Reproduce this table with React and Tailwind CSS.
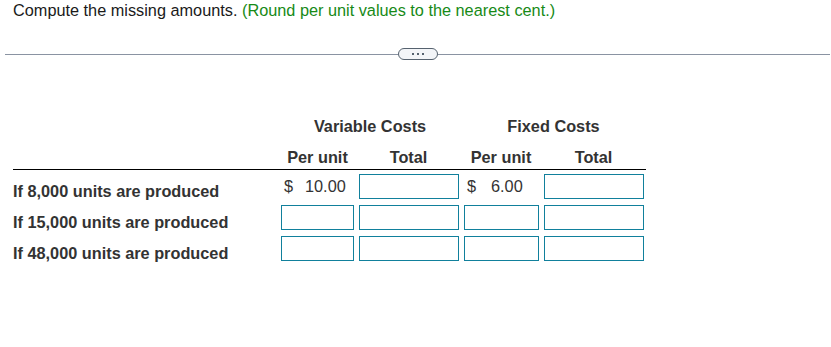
import React from "react";

const font = { fontFamily: '"Liberation Sans", Arial, sans-serif' };

function Box({ w }) {
  return <div className={`h-[25px] border border-[#11809c] bg-white ${w}`} />;
}

export default function App() {
  const rows = [
    { label: "If 8,000 units are produced", varUnit: "10.00", fixUnit: "6.00" },
    { label: "If 15,000 units are produced" },
    { label: "If 48,000 units are produced" },
  ];

  return (
    <div className="w-[831px] h-[347px] bg-white text-[#333]" style={font}>
      <p className="pl-[13px] pt-[1px] text-[16.3px] leading-[18px] text-[#1a1a1a]">
        Compute the missing amounts.{" "}
        <span className="text-[#178a17]">(Round per unit values to the nearest cent.)</span>
      </p>

      {/* section divider with collapse handle */}
      <div className="mt-[29px] flex items-center pl-[5px] pr-[1px]">
        <div className="h-px flex-1 bg-[#8a93a2]" />
        <div className="flex h-[12px] w-[40px] items-center justify-center gap-[3px] rounded-full border border-[#56626f] bg-[#f3f5f8]">
          <span className="h-[2px] w-[2px] bg-[#56626f]" />
          <span className="h-[2px] w-[2px] bg-[#56626f]" />
          <span className="h-[2px] w-[2px] bg-[#56626f]" />
        </div>
        <div className="h-px flex-1 bg-[#8a93a2]" />
      </div>

      <div className="ml-[13px] mt-[57px] w-[633px] text-[16.3px]">
        <div className="grid grid-cols-[266px_182px_185px] font-bold leading-[18px]">
          <div />
          <div className="text-center">Variable Costs</div>
          <div className="text-center">Fixed Costs</div>
        </div>
        <div className="mt-[13px] grid grid-cols-[266px_77px_105px_80px_105px] border-b border-black pb-[3px] font-bold leading-[18px]">
          <div />
          <div className="text-center">Per unit</div>
          <div className="text-center">Total</div>
          <div className="text-center">Per unit</div>
          <div className="text-center">Total</div>
        </div>

        <div className="mt-[4px] flex flex-col gap-[6px]">
          {rows.map((r) => (
            <div
              key={r.label}
              className="grid h-[25px] grid-cols-[266px_77px_105px_80px_105px] items-center"
            >
              <div className="self-end whitespace-nowrap font-bold leading-[16px]">{r.label}</div>
              <div className="pl-[2px]">
                {r.varUnit ? (
                  <div className="flex h-[25px] items-center pl-[3px]">
                    <span className="w-[21px]">$</span>
                    <span>{r.varUnit}</span>
                  </div>
                ) : (
                  <Box w="w-[73px]" />
                )}
              </div>
              <div className="pl-[3px]">
                <Box w="w-[100px]" />
              </div>
              <div className="pl-[3px]">
                {r.fixUnit ? (
                  <div className="flex h-[25px] items-center pl-[3px]">
                    <span className="w-[24px]">$</span>
                    <span>{r.fixUnit}</span>
                  </div>
                ) : (
                  <Box w="w-[75px]" />
                )}
              </div>
              <div className="pl-[3px]">
                <Box w="w-[100px]" />
              </div>
            </div>
          ))}
        </div>
      </div>
    </div>
  );
}
